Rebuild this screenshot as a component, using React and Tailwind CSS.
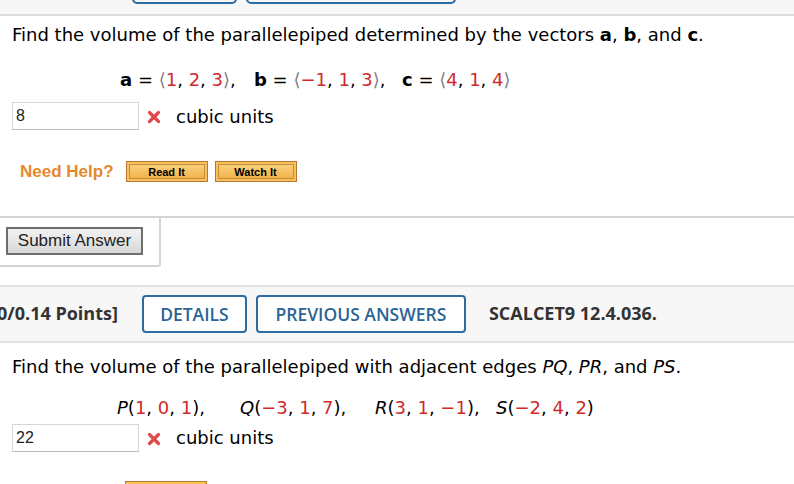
import React from 'react';

const R = ({ children }) => <span className="text-[#d0292b]">{children}</span>;
const L = () => <span className="text-[#808080]">⟨</span>;
const Rb = () => <span className="text-[#808080]">⟩</span>;

const RedX = () => (
  <svg width="14" height="14" viewBox="0 0 14 14" className="shrink-0">
    <path d="M2.5 2.5 L11.5 11.5 M11.5 2.5 L2.5 11.5" stroke="#e0484a" strokeWidth="3.2" strokeLinecap="round" />
  </svg>
);

const AnswerRow = ({ value }) => (
  <div className="flex items-center">
    <div className="ml-[12px] w-[127px] h-[28px] border border-[#d6d6d6] border-b-[#bbb] bg-white flex items-center pl-[3px] text-[16px] text-[#222] font-['Liberation_Sans',sans-serif]">
      {value}
    </div>
    <div className="ml-[8px] mt-[2px]"><RedX /></div>
    <span className="ml-[15px] text-[18px] text-black">cubic units</span>
  </div>
);

const OrangeBtn = ({ children, w }) => (
  <div className={`${w} h-[21px] border border-[#b8762e] bg-[#f6c25e] p-[2px]`}>
    <div className="h-full border border-[#c98a3c] bg-gradient-to-b from-[#f9d07a] to-[#f0b348] flex items-center justify-center text-[11px] font-bold text-black font-['Liberation_Sans',sans-serif]">
      {children}
    </div>
  </div>
);

export default function App() {
  return (
    <div className="w-[794px] h-[484px] overflow-hidden bg-white font-['DejaVu_Sans','Verdana',sans-serif] text-black">
      {/* top strip */}
      <div className="h-[16px] bg-[#f7f7f7] border-b-2 border-[#dcdcdc] flex items-start pl-[132px] gap-[9px] overflow-hidden">
        <div className="w-[105px] h-[20px] mt-[-16px] border-2 border-[#2d6ca2] rounded-[5px]" />
        <div className="w-[210px] h-[20px] mt-[-16px] border-2 border-[#2d6ca2] rounded-[5px]" />
      </div>

      {/* question 1 */}
      <div className="pt-[7px]">
        <p className="pl-[12px] text-[18px] leading-[24px]">
          Find the volume of the parallelepiped determined by the vectors <b>a</b>, <b>b</b>, and <b>c</b>.
        </p>
        <div className="pl-[120px] mt-[21px] text-[18px] leading-[24px] whitespace-pre flex">
          <span className="w-[134px]"><b>a</b> = <L /><R>1</R>, <R>2</R>, <R>3</R><Rb />,</span>
          <span className="w-[148px]"><b>b</b> = <L /><R>−1</R>, <R>1</R>, <R>3</R><Rb />,</span>
          <span><b>c</b> = <L /><R>4</R>, <R>1</R>, <R>4</R><Rb /></span>
        </div>
        <div className="mt-[10px]">
          <AnswerRow value="8" />
        </div>
        <div className="mt-[29px] flex items-center pl-[20px]">
          <span className="text-[17px] font-bold text-[#e5882f] font-['Liberation_Sans',sans-serif]">Need Help?</span>
          <div className="ml-[12px] flex gap-[7px]">
            <OrangeBtn w="w-[82px]">Read It</OrangeBtn>
            <OrangeBtn w="w-[82px]">Watch It</OrangeBtn>
          </div>
        </div>
      </div>

      {/* submit */}
      <div className="mt-[31px] border-t-2 border-[#d4d4d4]">
        <div className="w-[161px] h-[49px] border-r-2 border-b-2 border-[#d4d4d4] rounded-br-[3px] flex items-center pl-[6px]">
          <button className="w-[137px] h-[28px] border-2 border-[#6e6e6e] bg-gradient-to-b from-[#f2f2f2] to-[#d8d8d8] text-[17px] text-[#222] font-['Liberation_Sans',sans-serif] flex items-center justify-center">
            Submit Answer
          </button>
        </div>
      </div>

      {/* question 2 header */}
      <div className="mt-[18px] h-[58px] bg-[#f7f7f7] border-y-2 border-[#e2e2e2] flex items-center font-['Open_Sans',sans-serif]">
        <span className="ml-[-3px] text-[18px] font-bold text-[#333]">0/0.14 Points]</span>
        <div className="ml-[24px] mt-[1px] w-[105px] h-[38px] border-2 border-[#2d6ca2] rounded-[4px] bg-white flex items-center justify-center text-[17.5px] font-semibold text-[#2a6496]">
          DETAILS
        </div>
        <div className="ml-[9px] mt-[1px] w-[210px] h-[38px] border-2 border-[#2d6ca2] rounded-[4px] bg-white flex items-center justify-center text-[17.5px] font-semibold text-[#2a6496]">
          PREVIOUS ANSWERS
        </div>
        <span className="ml-[23px] text-[18px] font-bold text-[#333]">SCALCET9 12.4.036.</span>
      </div>

      {/* question 2 */}
      <div className="pt-[12px]">
        <p className="pl-[12px] text-[18px] leading-[24px]">
          Find the volume of the parallelepiped with adjacent edges <i>PQ</i>, <i>PR</i>, and <i>PS</i>.
        </p>
        <div className="pl-[117px] mt-[17px] text-[18px] leading-[24px] whitespace-pre flex">
          <span className="w-[123px]"><i>P</i>(<R>1</R>, <R>0</R>, <R>1</R>),</span>
          <span className="w-[135px]"><i>Q</i>(<R>−3</R>, <R>1</R>, <R>7</R>),</span>
          <span className="w-[121px]"><i>R</i>(<R>3</R>, <R>1</R>, <R>−1</R>),</span>
          <span><i>S</i>(<R>−2</R>, <R>4</R>, <R>2</R>)</span>
        </div>
        <div className="mt-[4px]">
          <AnswerRow value="22" />
        </div>
        <div className="mt-[29px] pl-[125px]">
          <div className="w-[82px] h-[21px] border border-[#b8762e] bg-[#f6c25e]" />
        </div>
      </div>
    </div>
  );
}
